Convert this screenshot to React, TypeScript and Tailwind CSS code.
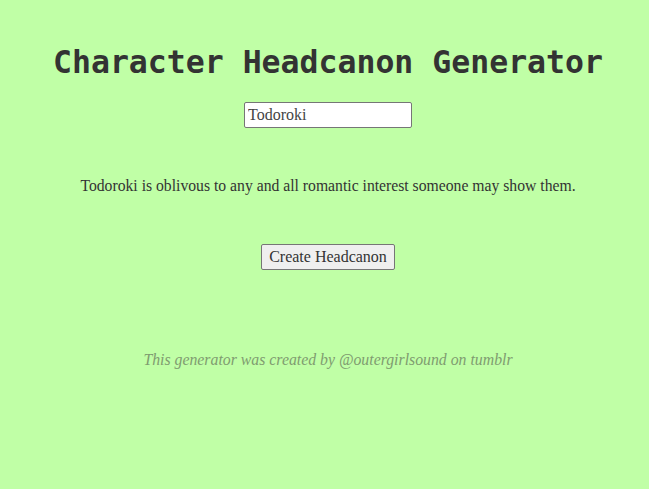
import React, { useState } from "react";

const lines = [
  "is oblivous to any and all romantic interest someone may show them.",
];

export default function App() {
  const [name, setName] = useState("Todoroki");
  const [line, setLine] = useState(lines[0]);

  return (
    <div className="min-h-[489px] w-full bg-[#c0ffa6] text-[#333333] flex flex-col items-center pt-[43px] pl-[7px] font-['Liberation_Serif',serif]">
      <h1 className="font-['DejaVu_Sans_Mono',monospace] font-bold text-[31.5px] leading-[38px] text-center">
        Character Headcanon Generator
      </h1>

      <input
        type="text"
        value={name}
        onChange={(e) => setName(e.target.value)}
        className="mt-[21px] w-[168px] h-[26px] bg-white border border-[#767676] rounded-[2px] px-[3px] text-[16px] text-[#444444] outline-none"
      />

      <p className="mt-[49px] text-[15.7px] leading-[18px] text-center">
        {name} {line}
      </p>

      <button
        onClick={() => setLine(lines[Math.floor(Math.random() * lines.length)])}
        className="mt-[49px] h-[26px] px-[7px] bg-[#efefef] border border-[#767676] rounded-[2px] text-[16px] text-[#333333]"
      >
        Create Headcanon
      </button>

      <p className="mt-[81px] text-[15.8px] leading-[18px] italic text-[#7f9c70]">
        This generator was created by @outergirlsound on tumblr
      </p>
    </div>
  );
}
